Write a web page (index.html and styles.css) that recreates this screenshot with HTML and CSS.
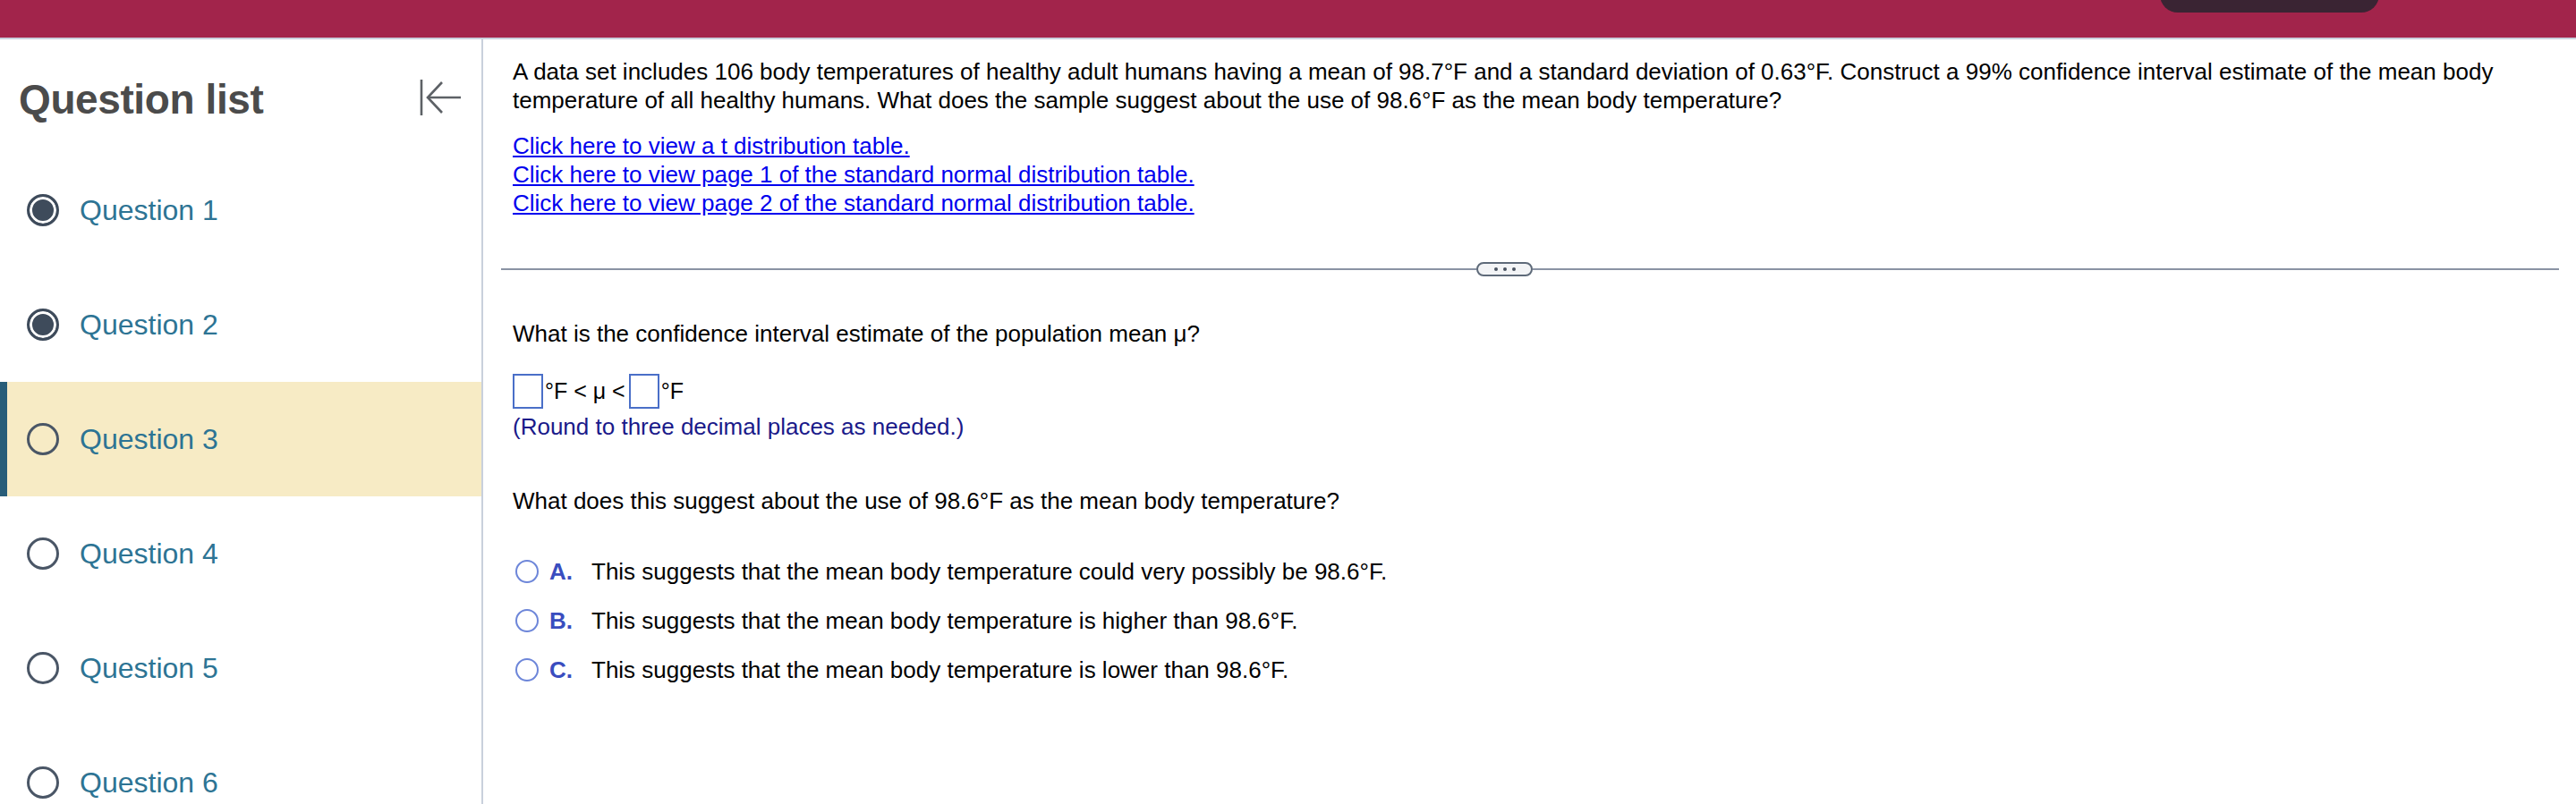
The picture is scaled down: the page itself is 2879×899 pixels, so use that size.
FILE: index.html
```html
<!DOCTYPE html>
<html lang="en">
<head>
<meta charset="utf-8">
<title>Question 3</title>
<link rel="stylesheet" href="styles.css">
</head>
<body>
<header class="topbar">
  <div class="topbar-pill"></div>
</header>
<div class="layout">
  <aside class="sidebar">
    <div class="sidebar-head">
      <h2 class="sidebar-title">Question list</h2>
      <svg class="collapse-icon" width="48" height="42" viewBox="0 0 48 42" aria-hidden="true">
        <path d="M3 1 V41" />
        <path d="M10 21 H47" />
        <path d="M26 4 L10 21 L26 38" />
      </svg>
    </div>
    <ul class="qlist">
      <li class="qitem"><span class="qradio done"></span><span class="qlabel">Question 1</span></li>
      <li class="qitem"><span class="qradio done"></span><span class="qlabel">Question 2</span></li>
      <li class="qitem current"><span class="qradio"></span><span class="qlabel">Question 3</span></li>
      <li class="qitem"><span class="qradio"></span><span class="qlabel">Question 4</span></li>
      <li class="qitem"><span class="qradio"></span><span class="qlabel">Question 5</span></li>
      <li class="qitem"><span class="qradio"></span><span class="qlabel">Question 6</span></li>
    </ul>
  </aside>
  <main class="content">
    <p class="stem">A data set includes 106 body temperatures of healthy adult humans having a mean of 98.7°F and a standard deviation of 0.63°F. Construct a 99% confidence interval estimate of the mean body temperature of all healthy humans. What does the sample suggest about the use of 98.6°F as the mean body temperature?</p>
    <div class="links">
      <a href="#">Click here to view a t distribution table.</a>
      <a href="#">Click here to view page 1 of the standard normal distribution table.</a>
      <a href="#">Click here to view page 2 of the standard normal distribution table.</a>
    </div>
    <div class="divider">
      <span class="divider-line left"></span>
      <span class="more-btn"><i></i><i></i><i></i></span>
      <span class="divider-line right"></span>
    </div>
    <p class="q">What is the confidence interval estimate of the population mean μ?</p>
    <div class="answer-row">
      <span class="answer-box"></span>
      <span class="answer-text">°F &lt; μ &lt;</span>
      <span class="answer-box"></span>
      <span class="answer-text">°F</span>
    </div>
    <p class="hint">(Round to three decimal places as needed.)</p>
    <p class="q q2">What does this suggest about the use of 98.6°F as the mean body temperature?</p>
    <ul class="options">
      <li class="option"><span class="oradio"></span><span class="olabel">A.</span><span class="otext">This suggests that the mean body temperature could very possibly be 98.6°F.</span></li>
      <li class="option"><span class="oradio"></span><span class="olabel">B.</span><span class="otext">This suggests that the mean body temperature is higher than 98.6°F.</span></li>
      <li class="option"><span class="oradio"></span><span class="olabel">C.</span><span class="otext">This suggests that the mean body temperature is lower than 98.6°F.</span></li>
    </ul>
  </main>
</div>
</body>
</html>
```

FILE: styles.css
```css
html, body {
  margin: 0;
  padding: 0;
}

body {
  font-family: "Liberation Sans", Arial, Helvetica, sans-serif;
  background: #ffffff;
  color: #000000;
  width: 2879px;
  height: 899px;
  overflow: hidden;
}

/* top bar */
.topbar {
  height: 42px;
  background: #a2244b;
  border-bottom: 2px solid #c9d0dc;
  display: flex;
  justify-content: flex-end;
  padding-right: 220px;
  overflow: hidden;
}

.topbar-pill {
  width: 245px;
  height: 40px;
  margin-top: -26px;
  background: #3a2433;
  border-radius: 20px;
}

.layout {
  display: flex;
  height: 855px;
}

/* sidebar */
.sidebar {
  width: 538px;
  flex: none;
  border-right: 2px solid #c9d0dc;
  overflow: hidden;
}

.sidebar-head {
  height: 127px;
  box-sizing: border-box;
  padding: 6px 22px 0 21px;
  display: flex;
  align-items: center;
  justify-content: space-between;
}

.sidebar-title {
  margin: 0;
  font-size: 46px;
  font-weight: bold;
  letter-spacing: -0.4px;
  color: #4b4b4b;
}

.collapse-icon {
  margin-bottom: 4px;
  fill: none;
  stroke: #5d6166;
  stroke-width: 2.6;
  stroke-linecap: butt;
  stroke-linejoin: miter;
}

.qlist {
  list-style: none;
  margin: 0;
  padding: 0;
}

.qitem {
  height: 128px;
  display: flex;
  align-items: center;
  gap: 23px;
  padding-left: 30px;
}

.qitem.current {
  background: #f7ebc5;
  box-shadow: inset 8px 0 0 #285d79;
}

.qradio {
  width: 36px;
  height: 36px;
  box-sizing: border-box;
  border-radius: 50%;
  border: 3px solid #4a5666;
  flex: none;
}

.qradio.done {
  background: #3e4b5b;
  border-color: #3e4b5b;
  box-shadow: inset 0 0 0 3px #ffffff;
}

.qlabel {
  font-size: 32px;
  color: #2d7494;
}

/* main content */
.content {
  flex: 1;
  min-width: 0;
  padding: 20px 29px 0 33px;
}

.stem {
  margin: 0;
  font-size: 26px;
  line-height: 32px;
}

.links {
  margin-top: 19px;
  display: flex;
  flex-direction: column;
  align-items: flex-start;
  font-size: 26px;
  line-height: 32px;
}

.links a {
  color: #0000ee;
  text-decoration: underline;
}

.divider {
  margin: 50px -10px 0 -13px;
  height: 16px;
  display: flex;
  align-items: center;
}

.divider-line {
  height: 2px;
  background: #8a93a4;
}

.divider-line.left {
  flex: 0 0 1090px;
}

.divider-line.right {
  flex: 1;
}

.more-btn {
  width: 63px;
  height: 16px;
  box-sizing: border-box;
  border: 2px solid #5e6a79;
  border-radius: 8px;
  background: #f3f4f6;
  display: flex;
  align-items: center;
  justify-content: center;
  gap: 6px;
}

.more-btn i {
  width: 4px;
  height: 4px;
  border-radius: 50%;
  background: #4b5361;
}

.q {
  margin: 48px 0 0;
  font-size: 26px;
  line-height: 32px;
}

.answer-row {
  margin-top: 29px;
  height: 39px;
  display: flex;
  align-items: center;
  font-size: 25px;
}

.answer-box {
  width: 34px;
  height: 39px;
  box-sizing: border-box;
  border: 2px solid #4a6fc8;
  flex: none;
}

.answer-text {
  margin: 0 4px 0 2px;
  white-space: pre;
}

.hint {
  margin: 4px 0 0;
  font-size: 26px;
  line-height: 32px;
  color: #1a1a8a;
}

.q2 {
  margin-top: 51px;
}

.options {
  list-style: none;
  margin: 47px 0 0;
  padding: 0;
  display: flex;
  flex-direction: column;
  gap: 23px;
}

.option {
  display: flex;
  align-items: center;
  height: 32px;
  font-size: 26px;
  line-height: 32px;
  padding-left: 3px;
}

.oradio {
  width: 26px;
  height: 26px;
  box-sizing: border-box;
  border-radius: 50%;
  border: 2px solid #6d86d9;
  flex: none;
  margin-right: 12px;
}

.olabel {
  min-width: 47px;
  font-weight: bold;
  color: #3a4dbf;
}
```
